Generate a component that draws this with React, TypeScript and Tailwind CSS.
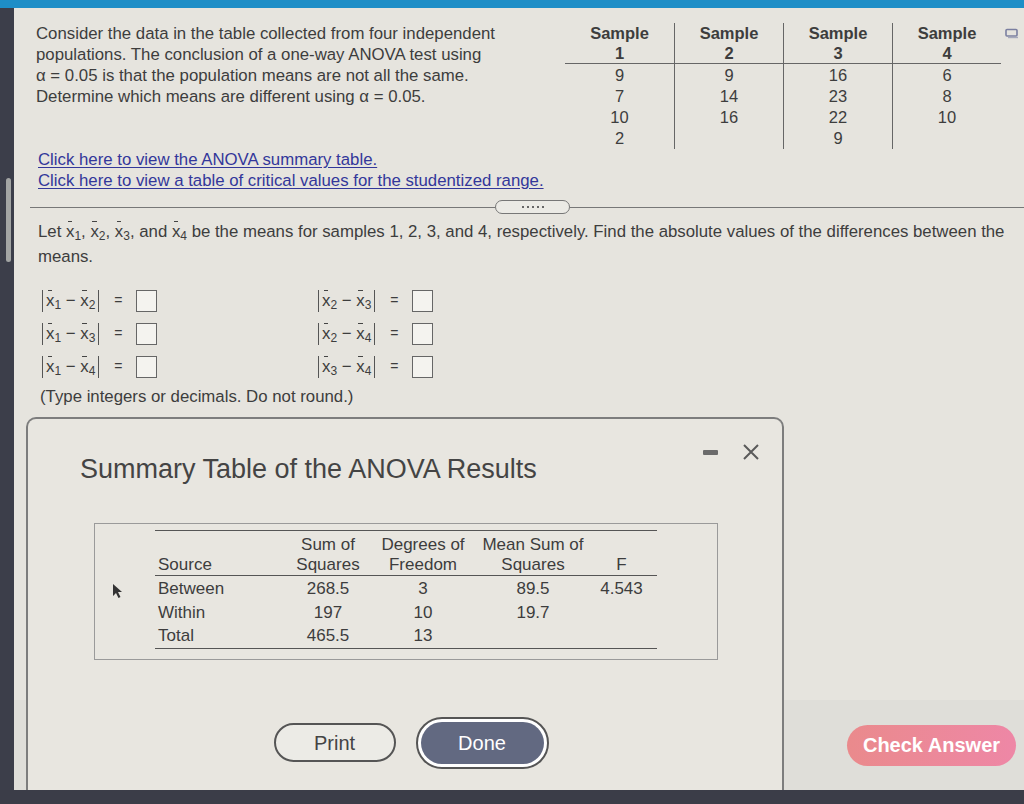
import React from 'react';

const font = { fontFamily: '"Liberation Sans", Arial, sans-serif' };

function Xbar({ n }: { n: number }) {
  return (
    <span className="inline-flex items-baseline">
      <span className="relative inline-block leading-none">
        x
        <span className="absolute left-[2px] right-[2px] top-[-3px] h-px bg-[#444]" />
      </span>
      <sub className="text-[12px] leading-none">{n}</sub>
    </span>
  );
}

function AbsDiff({ a, b }: { a: number; b: number }) {
  return (
    <span className="inline-flex items-center">
      <span className="h-[22px] w-px bg-[#555]" />
      <span className="px-[3px]">
        <Xbar n={a} /> <span>−</span> <Xbar n={b} />
      </span>
      <span className="h-[22px] w-px bg-[#555]" />
      <span className="ml-[15px] mr-[13px] text-[14px]">=</span>
      <span className="h-[22px] w-[21px] border border-[#666] bg-[#f4f3ef]" />
    </span>
  );
}

const samples = [
  { n: 1, values: [9, 7, 10, 2] },
  { n: 2, values: [9, 14, 16] },
  { n: 3, values: [16, 23, 22, 9] },
  { n: 4, values: [6, 8, 10] },
];

const anova = [
  { source: 'Between', ss: '268.5', df: '3', ms: '89.5', f: '4.543' },
  { source: 'Within', ss: '197', df: '10', ms: '19.7', f: '' },
  { source: 'Total', ss: '465.5', df: '13', ms: '', f: '' },
];

export default function App() {
  return (
    <div
      className="relative flex h-[804px] w-[1024px] flex-col overflow-hidden bg-[#e6e4de] text-[#3d3d3d]"
      style={font}
    >
      <div className="h-2 bg-[#1e8ec7]" />

      <div className="flex h-[782px]">
        {/* left rail */}
        <div className="flex w-[14px] shrink-0 flex-col bg-[#3c3e4a] pt-[170px]">
          <div className="ml-[6px] h-[84px] w-[5px] rounded-full bg-[#a3a5a4]" />
        </div>

        <div className="flex flex-1 flex-col">
          {/* question + data table */}
          <div className="flex pt-[15px]">
            <div className="w-[551px] shrink-0 pl-[22px]">
              <p className="whitespace-nowrap text-[16.8px] leading-[21px]">
                Consider the data in the table collected from four independent
                <br />
                populations. The conclusion of a one-way ANOVA test using
                <br />
                α = 0.05 is that the population means are not all the same.
                <br />
                Determine which means are different using α = 0.05.
              </p>
              <div className="mt-[42px] flex flex-col whitespace-nowrap pl-[2px] text-[16.8px] leading-[21px] text-[#33379a]">
                <a className="underline underline-offset-2">Click here to view the ANOVA summary table.</a>
                <a className="underline underline-offset-2">
                  Click here to view a table of critical values for the studentized range.
                </a>
              </div>
            </div>

            <div className="flex shrink-0">
              {samples.map((s, i) => (
                <div
                  key={s.n}
                  className={`flex h-[126px] w-[109px] flex-col ${i > 0 ? 'border-l border-[#666]' : ''}`}
                >
                  <div className="flex h-[41px] flex-col items-center border-b border-[#666] text-[16.5px] font-bold leading-[20px]">
                    <span>Sample</span>
                    <span>{s.n}</span>
                  </div>
                  <div className="flex flex-col items-center pt-px text-[16.5px] leading-[21px]">
                    {s.values.map((v, j) => (
                      <span key={j}>{v}</span>
                    ))}
                  </div>
                </div>
              ))}
            </div>
          </div>

          {/* separator */}
          <div className="mt-[9px] flex items-center">
            <div className="ml-[16px] h-px w-[465px] bg-[#777]" />
            <div className="flex h-[14px] w-[75px] items-center justify-center gap-[3px] rounded-full border border-[#777] bg-[#ebeae5]">
              {[0, 1, 2, 3, 4].map((d) => (
                <span key={d} className="h-[2px] w-[2px] bg-[#666]" />
              ))}
            </div>
            <div className="h-px flex-1 bg-[#777]" />
          </div>

          {/* means prompt */}
          <p className="mt-[5px] whitespace-nowrap pl-[24px] text-[16.8px] leading-[25px]">
            Let <Xbar n={1} />, <Xbar n={2} />, <Xbar n={3} />, and <Xbar n={4} /> be the means for samples 1, 2, 3,
            and 4, respectively. Find the absolute values of the differences between the
            <br />
            means.
          </p>

          <div className="mt-[15px] grid grid-cols-[276px_1fr] pl-[28px] text-[16.8px]">
            {[
              [1, 2, 2, 3],
              [1, 3, 2, 4],
              [1, 4, 3, 4],
            ].map(([a, b, c, d]) => (
              <React.Fragment key={`${a}${b}`}>
                <div className="flex h-[33px] items-center">
                  <AbsDiff a={a} b={b} />
                </div>
                <div className="flex h-[33px] items-center">
                  <AbsDiff a={c} b={d} />
                </div>
              </React.Fragment>
            ))}
          </div>
          <p className="mt-[4px] pl-[26px] text-[16.8px] leading-[20px]">(Type integers or decimals. Do not round.)</p>

          {/* footer */}
          <div className="mt-auto flex h-[90px] items-center justify-end bg-[#dfded9] pr-[8px]">
            <button className="h-[41px] w-[169px] rounded-full bg-gradient-to-r from-[#ea8a8c] to-[#ee87a6] text-[20px] font-bold text-white">
              Check Answer
            </button>
          </div>
        </div>
      </div>

      <div className="h-[14px] bg-[#3b3d48]" />

      {/* popout button next to the data table */}
      <svg className="absolute left-[1005px] top-[28px]" width="14" height="12" viewBox="0 0 14 12">
        <rect x="1" y="1.5" width="11" height="6.5" rx="1" fill="none" stroke="#7b7fa0" strokeWidth="1.6" />
        <rect x="3" y="8.8" width="10" height="1.4" fill="#a5a8bb" />
      </svg>

      {/* ANOVA summary dialog */}
      <div className="absolute left-[26px] top-[417px] flex h-[373px] w-[758px] flex-col rounded-t-[10px] border-2 border-b-0 border-[#7d7d7d] bg-[#e8e6e0]">
        <div className="absolute right-[22px] top-[24px] flex items-center gap-[24px]">
          <span className="h-[5px] w-[15px] rounded-[1px] bg-[#6b6b6b]" />
          <svg width="18" height="18" viewBox="0 0 18 18">
            <path d="M2 2 L16 16 M16 2 L2 16" stroke="#5a5a5a" strokeWidth="2" />
          </svg>
        </div>

        <h2 className="mt-[35px] whitespace-nowrap pl-[52px] text-[27px] leading-[30px] text-[#444]">
          Summary Table of the ANOVA Results
        </h2>

        <div className="relative ml-[66px] mt-[39px] w-[624px] border border-[#9a9a9a] pb-[10px] pl-[60px] pt-[6px]">
          <svg className="absolute left-[17px] top-[59px]" width="12" height="16" viewBox="0 0 12 16">
            <path d="M1 1 L1 13 L4 10 L6.5 15 L8.5 14 L6 9 L10 9 Z" fill="#333" />
          </svg>
          <div className="w-[502px] border-y border-[#555] pb-[1px] pt-[4px] text-[17px]">
            <div className="grid grid-cols-[135px_76px_114px_106px_71px] whitespace-nowrap border-b border-[#555] leading-[20px]">
              <span className="self-end pl-[3px]">Source</span>
              <span className="text-center">
                Sum of
                <br />
                Squares
              </span>
              <span className="text-center">
                Degrees of
                <br />
                Freedom
              </span>
              <span className="text-center">
                Mean Sum of
                <br />
                Squares
              </span>
              <span className="self-end text-center">F</span>
            </div>
            {anova.map((r) => (
              <div
                key={r.source}
                className="grid h-[23.5px] grid-cols-[135px_76px_114px_106px_71px] items-center"
              >
                <span className="pl-[3px]">{r.source}</span>
                <span className="text-center">{r.ss}</span>
                <span className="text-center">{r.df}</span>
                <span className="text-center">{r.ms}</span>
                <span className="text-center">{r.f}</span>
              </div>
            ))}
          </div>
        </div>

        <div className="mt-[57px] flex items-center justify-center gap-[20px] pl-[12px]">
          <button className="h-[39px] w-[122px] rounded-full border-2 border-[#555] bg-[#ecebe6] text-[20px] text-[#444]">
            Print
          </button>
          <div className="rounded-full border-2 border-[#555] bg-white p-[3px]">
            <button className="h-[42px] w-[123px] rounded-full bg-[#626981] text-[20px] text-white">Done</button>
          </div>
        </div>
      </div>
    </div>
  );
}
